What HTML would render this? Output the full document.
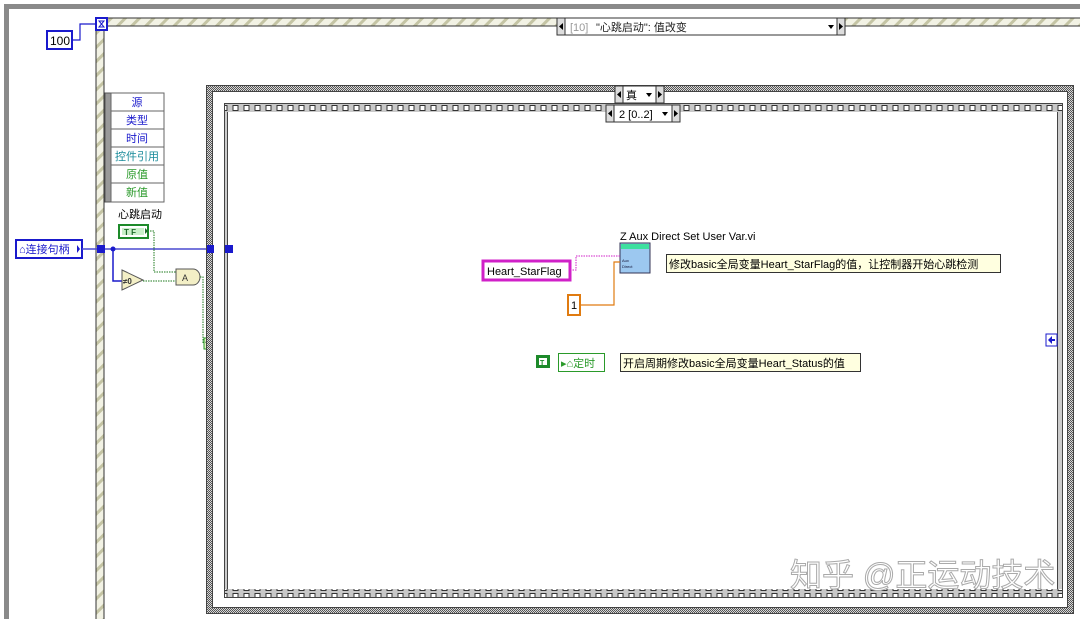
<!DOCTYPE html>
<html><head><meta charset="utf-8"><style>
html,body{margin:0;padding:0;background:#fff;width:1080px;height:619px;overflow:hidden}
text{font-family:"Liberation Sans","Noto Sans CJK SC",sans-serif}
</style></head><body>
<svg width="1080" height="619" viewBox="0 0 1080 619" xmlns="http://www.w3.org/2000/svg">
<defs>
<pattern id="hatch" width="10" height="10" patternUnits="userSpaceOnUse" patternTransform="rotate(45)">
<rect width="10" height="10" fill="#f2f2e4"/><rect width="3" height="10" fill="#c4c4a4"/></pattern>
<pattern id="chk" width="2" height="2" patternUnits="userSpaceOnUse">
<rect width="2" height="2" fill="#d8d8d8"/><rect width="1" height="1" fill="#555"/><rect x="1" y="1" width="1" height="1" fill="#555"/></pattern>
<pattern id="film" x="230" width="11" height="8" patternUnits="userSpaceOnUse">
<rect width="11" height="8" fill="#c8c8c8"/><rect x="3" y="1.5" width="5" height="5" fill="#fff" stroke="#333" stroke-width="1"/></pattern>
</defs>
<rect x="4" y="4" width="1076" height="5" fill="#8a8a8a"/>
<rect x="4" y="4" width="5" height="615" fill="#8a8a8a"/>
<rect x="96" y="18" width="990" height="8" fill="url(#hatch)" stroke="#333" stroke-width="1"/>
<rect x="96" y="18" width="8" height="610" fill="url(#hatch)" stroke="#333" stroke-width="1"/>
<rect x="104" y="26" width="980" height="600" fill="#fff" stroke="#333" stroke-width="1"/>
<rect x="96" y="18" width="11" height="12" fill="#fff" stroke="#1a1acc" stroke-width="2"/>
<path d="M99 21 h5 l-5 6 h5z" fill="none" stroke="#1a1acc" stroke-width="1"/>
<rect x="557" y="18" width="288" height="17" fill="#fff" stroke="#333"/>
<rect x="557" y="18" width="8" height="17" fill="#ddd" stroke="#333"/><path d="M563 23 l-4 3.5 l4 3.5z" fill="#000"/>
<rect x="837" y="18" width="8" height="17" fill="#ddd" stroke="#333"/><path d="M839 23 l4 3.5 l-4 3.5z" fill="#000"/>
<path d="M828 25 h6 l-3 4z" fill="#000"/>
<text x="570" y="31" font-size="11" fill="#999">[10]</text>
<text x="596" y="31" font-size="11" fill="#222">"心跳启动": 值改变</text>
<rect x="47" y="31" width="25" height="18" fill="#fff" stroke="#1a1acc" stroke-width="2"/>
<text x="50" y="45" font-size="12" fill="#000">100</text>
<path d="M72 40 h8 v-16 h16" fill="none" stroke="#1a1acc" stroke-width="1.2"/>
<rect x="105" y="93" width="6" height="109" fill="#999" stroke="#555"/>
<g font-size="11" text-anchor="middle">
<rect x="111" y="93" width="53" height="18" fill="#fff" stroke="#666"/><text x="137" y="106" fill="#1a1acc">源</text>
<rect x="111" y="111" width="53" height="18" fill="#fff" stroke="#666"/><text x="137" y="124" fill="#1a1acc">类型</text>
<rect x="111" y="129" width="53" height="18" fill="#fff" stroke="#666"/><text x="137" y="142" fill="#1a1acc">时间</text>
<rect x="111" y="147" width="53" height="18" fill="#fff" stroke="#666"/><text x="137" y="160" fill="#198b9a">控件引用</text>
<rect x="111" y="165" width="53" height="18" fill="#fff" stroke="#666"/><text x="137" y="178" fill="#2a9a2a">原值</text>
<rect x="111" y="183" width="53" height="19" fill="#fff" stroke="#666"/><text x="137" y="196" fill="#2a9a2a">新值</text>
</g>
<text x="118" y="218" font-size="11" fill="#000">心跳启动</text>
<rect x="119" y="225" width="29" height="13" fill="#fff" stroke="#1d8a2a" stroke-width="2"/>
<rect x="122" y="228" width="22" height="7" fill="#c9f0c9"/>
<text x="124" y="235" font-size="8" font-weight="bold" fill="#1d6a2a">T F</text>
<path d="M145 228 l3 3 l-3 3z" fill="#1d6a2a"/>
<rect x="16" y="240" width="66" height="18" fill="#fff" stroke="#1a1acc" stroke-width="2"/>
<text x="19" y="253" font-size="11" fill="#1a1acc">⌂连接句柄</text>
<path d="M77 245 l3 4 l-3 4z" fill="#1a1acc"/>
<path d="M82 249 H620" stroke="#4a4ad0" stroke-width="1.5"/>
<rect x="97" y="245" width="8" height="8" fill="#1a1acc"/>
<circle cx="113" cy="249" r="2.5" fill="#1a1acc"/>
<path d="M113 249 V281 H122" fill="none" stroke="#1a1acc" stroke-width="1.5"/>
<path d="M122 270 L143 280 L122 290z" fill="#f3efc6" stroke="#555"/>
<text x="123" y="284" font-size="8" font-weight="bold" fill="#333">≠0</text>
<path d="M176 269 h17 a7 8 0 0 1 0 16 h-17z" fill="#f3efc6" stroke="#555"/>
<text x="182" y="281" font-size="9" fill="#333">A</text>
<g fill="none" stroke="#1d7a1d" stroke-width="1" stroke-dasharray="1.5 1">
<path d="M150 231 h4 v41 h22"/>
<path d="M143 281 h33"/>
<path d="M200 277 h3 v66 h3"/>
<path d="M550 362 h8"/>
</g>
<rect x="204" y="338" width="8" height="11" fill="#dff5c0" stroke="#2a9a2a"/>
<text x="205" y="347" font-size="8" fill="#333">?</text>
<rect x="206" y="85" width="868" height="529" fill="url(#chk)"/>
<rect x="212.5" y="91.5" width="855" height="516" fill="#fff" stroke="#444"/>
<rect x="206.5" y="85.5" width="867" height="528" fill="none" stroke="#444"/>
<rect x="207" y="245" width="7" height="8" fill="#1a1acc"/>
<rect x="224.5" y="103.5" width="838" height="494" fill="none" stroke="#444"/>
<rect x="227.5" y="111.5" width="830" height="478" fill="none" stroke="#444"/>
<rect x="1058" y="112" width="4" height="477" fill="#ccc"/>
<rect x="225" y="112" width="2" height="477" fill="#ccc"/>
<rect x="225" y="104" width="837" height="8" fill="url(#film)"/>
<rect x="225" y="589" width="837" height="8" fill="url(#film)"/>
<rect x="225" y="245" width="8" height="8" fill="#1a1acc"/>
<rect x="615" y="86" width="49" height="17" fill="#fff" stroke="#333"/>
<rect x="615" y="86" width="8" height="17" fill="#ddd" stroke="#333"/><path d="M621 91 l-4 3.5 l4 3.5z" fill="#000"/>
<rect x="656" y="86" width="8" height="17" fill="#ddd" stroke="#333"/><path d="M658 91 l4 3.5 l-4 3.5z" fill="#000"/>
<text x="626" y="99" font-size="11" fill="#000">真</text><path d="M646 93 h6 l-3 4z" fill="#000"/>
<rect x="606" y="105" width="74" height="17" fill="#fff" stroke="#333"/>
<rect x="606" y="105" width="8" height="17" fill="#ddd" stroke="#333"/><path d="M612 110 l-4 3.5 l4 3.5z" fill="#000"/>
<rect x="672" y="105" width="8" height="17" fill="#ddd" stroke="#333"/><path d="M674 110 l4 3.5 l-4 3.5z" fill="#000"/>
<text x="619" y="118" font-size="11" fill="#000">2 [0..2]</text><path d="M662 112 h6 l-3 4z" fill="#000"/>
<text x="620" y="240" font-size="11" fill="#000">Z Aux Direct Set User Var.vi</text>
<rect x="620" y="243" width="30" height="30" fill="#9cc8f0" stroke="#335"/>
<rect x="621" y="244" width="28" height="5" fill="#3ce0a0"/>
<text x="622" y="262" font-size="4" fill="#113">Aux</text><text x="622" y="268" font-size="4" fill="#113">Direct</text>
<rect x="483" y="261" width="87" height="19" fill="#fff" stroke="#d020c8" stroke-width="3"/>
<text x="487" y="275" font-size="11" fill="#000">Heart_StarFlag</text>
<path d="M570 270 h6 v-14 h44" fill="none" stroke="#d020c8" stroke-width="1" stroke-dasharray="1.5 1"/>
<rect x="568" y="295" width="12" height="20" fill="#fff" stroke="#e07b10" stroke-width="2"/>
<text x="571" y="309" font-size="11" fill="#000">1</text>
<path d="M580 305 h34 v-43 h6" fill="none" stroke="#e07b10" stroke-width="1.2"/>
<rect x="666.5" y="254.5" width="334" height="18" fill="#ffffe0" stroke="#333"/>
<text x="669" y="268" font-size="11" fill="#000">修改basic全局变量Heart_StarFlag的值，让控制器开始心跳检测</text>
<rect x="536" y="355" width="14" height="13" fill="#1d8a2a"/>
<rect x="539" y="358" width="8" height="7" fill="#fff"/>
<text x="540" y="365" font-size="7" font-weight="bold" fill="#1d8a2a">T</text>
<rect x="558.5" y="353.5" width="46" height="18" fill="#fff" stroke="#2a9a2a"/>
<text x="561" y="367" font-size="11" fill="#2a9a2a">▸⌂定时</text>
<rect x="620.5" y="353.5" width="240" height="18" fill="#ffffe0" stroke="#333"/>
<text x="623" y="367" font-size="11" fill="#000">开启周期修改basic全局变量Heart_Status的值</text>
<rect x="1046" y="334" width="11" height="12" fill="#fff" stroke="#1a1acc"/>
<path d="M1048 340 l4 -4 v3 h3 v2 h-3 v3z" fill="#1a1acc"/>
<text x="790" y="586" font-size="32" fill="#fff" stroke="#aaa" stroke-width="1">知乎 @正运动技术</text>
</svg>
</body></html>
